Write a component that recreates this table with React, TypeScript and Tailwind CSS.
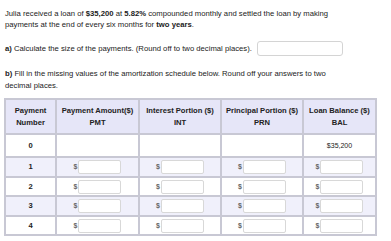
import React from "react";

const font = { fontFamily: '"Liberation Sans", Arial, sans-serif' };

function MoneyInput() {
  return (
    <div className="flex items-center justify-center">
      <span className="text-[7px] font-bold text-[#666]">$</span>
      <div className="ml-[1px] h-[14px] w-[43px] rounded-[2px] border border-[#d8d8d8] bg-white" />
    </div>
  );
}

const cell = "border-2 border-[#c8c8d4]";

export default function App() {
  const rows = [1, 2, 3, 4];
  return (
    <div className="h-[241px] w-[391px] bg-white pl-[5px] pt-[8px] text-[#222]" style={font}>
      <p className="text-[7.7px] leading-[11px] whitespace-nowrap">
        Julia received a loan of <b>$35,200</b> at <b>5.82%</b> compounded monthly and settled the loan by making
        <br />
        payments at the end of every six months for <b>two years</b>.
      </p>
      <div className="mt-[11px] flex items-center text-[7.7px] leading-[11px]">
        <span className="whitespace-nowrap">
          <b>a)</b> Calculate the size of the payments. (Round off to two decimal places).
        </span>
        <div className="ml-[5px] h-[15px] w-[86px] rounded-[3px] border border-[#d4d4d4] bg-white" />
      </div>
      <p className="mt-[12px] whitespace-nowrap text-[7.7px] leading-[12px]">
        <b>b)</b> Fill in the missing values of the amortization schedule below. Round off your answers to two
        <br />
        decimal places.
      </p>
      <table className="ml-[-1px] mt-[6px] border-collapse border-2 border-[#b8b8c8] text-[7.6px] leading-[12px]">
        <thead>
          <tr className="h-[35px] bg-[#e6e6f8] font-bold">
            <th className={`w-[51px] ${cell} font-bold`}>Payment<br />Number</th>
            <th className={`w-[83px] ${cell} font-bold`}>Payment Amount($)<br />PMT</th>
            <th className={`w-[82px] ${cell} font-bold`}>Interest Portion ($)<br />INT</th>
            <th className={`w-[82px] ${cell} font-bold`}>Principal Portion ($)<br />PRN</th>
            <th className={`w-[73px] ${cell} font-bold`}>Loan Balance ($)<br />BAL</th>
          </tr>
        </thead>
        <tbody>
          <tr className="h-[23px] bg-white">
            <td className={`${cell} text-center font-bold`}>0</td>
            <td className={cell}></td>
            <td className={cell}></td>
            <td className={cell}></td>
            <td className={`${cell} text-center text-[7px]`}>$35,200</td>
          </tr>
          {rows.map((n) => (
            <tr key={n} className={n % 2 === 1 ? "h-[20px] bg-[#f0f0fb]" : "h-[19px] bg-white"}>
              <td className={`${cell} text-center font-bold`}>{n}</td>
              <td className={cell}><MoneyInput /></td>
              <td className={cell}><MoneyInput /></td>
              <td className={cell}><MoneyInput /></td>
              <td className={cell}><MoneyInput /></td>
            </tr>
          ))}
        </tbody>
      </table>
    </div>
  );
}
